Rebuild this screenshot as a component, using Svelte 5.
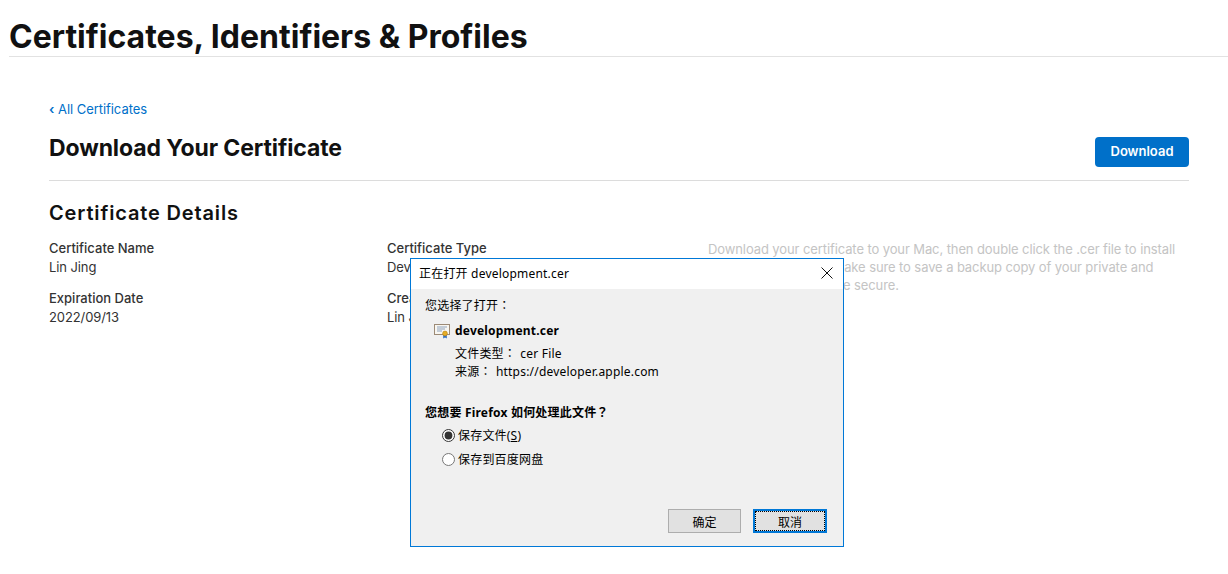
<script>
    let choice = "save";
</script>

<div class="page">
    <header class="top">
        <h1>Certificates, Identifiers &amp; Profiles</h1>
    </header>

    <main class="content">
        <a class="back" href="#top"><span class="chev">‹</span> All Certificates</a>
        <div class="title-row">
            <h2>Download Your Certificate</h2>
            <button class="download">Download</button>
        </div>

        <h3>Certificate Details</h3>
        <div class="details">
            <div class="col">
                <dl>
                    <dt>Certificate Name</dt>
                    <dd>Lin Jing</dd>
                </dl>
                <dl>
                    <dt>Expiration Date</dt>
                    <dd>2022/09/13</dd>
                </dl>
            </div>
            <div class="col">
                <dl>
                    <dt>Certificate Type</dt>
                    <dd>Development</dd>
                </dl>
                <dl>
                    <dt>Created By</dt>
                    <dd>Lin Jing</dd>
                </dl>
            </div>
            <p class="hint">
                Download your certificate to your Mac, then double click the .cer file to install
                in Keychain Access. Make sure to save a backup copy of your private and
                public keys somewhere secure.
            </p>
        </div>
    </main>

    <div class="dialog">
        <div class="dialog-title">
            <span>正在打开 development.cer</span>
            <svg class="close" width="12" height="12" viewBox="0 0 12 12">
                <path d="M.5.5l11 11M11.5.5l-11 11" stroke="#111" fill="none" />
            </svg>
        </div>
        <div class="dialog-body">
            <div class="chosen">您选择了打开<span class="punct">：</span></div>
            <div class="file">
                <svg width="16" height="16" viewBox="0 0 16 16">
                    <rect x=".5" y="1.5" width="15" height="10" fill="#f8f6f1" stroke="#9c8a76" />
                    <path d="M3 4h10M3 6h8M3 8h5" stroke="#8fa3bd" fill="none" />
                    <path d="M9.2 11.5v4l1.8-1 1.8 1v-4z" fill="#2f6fc4" />
                    <circle cx="11" cy="10.5" r="2.4" fill="#e6ad25" stroke="#b9820f" stroke-width=".6" />
                </svg>
                <strong>development.cer</strong>
            </div>
            <div class="meta">
                <div>文件类型<span class="punct">：</span> <span class="gap">cer File</span></div>
                <div>来源<span class="punct">：</span> <span class="gap">https://developer.apple.com</span></div>
            </div>
            <div class="question">您想要 Firefox 如何处理此文件<span class="punct">？</span></div>
            <label class="radio first">
                <input type="radio" bind:group={choice} value="save" />
                <span>保存文件(<u>S</u>)</span>
            </label>
            <label class="radio">
                <input type="radio" bind:group={choice} value="baidu" />
                <span>保存到百度网盘</span>
            </label>
            <div class="actions">
                <button class="win">确定</button>
                <button class="win focused">取消</button>
            </div>
        </div>
    </div>
</div>

<style>
    :global(body) {
        background: #fff;
    }

    .page {
        position: relative;
        height: 574px;
        overflow: hidden;
        font-family: Inter, "Liberation Sans", sans-serif;
        color: #111;
    }

    .top {
        margin: 0 0 0 9px;
        padding-top: 17px;
        height: 39px;
        border-bottom: 1px solid #e2e2e2;
    }

    h1 {
        margin: 0;
        font-size: 32px;
        line-height: 39px;
        font-weight: 700;
        letter-spacing: 0;
    }

    .content {
        padding: 43px 39px 0 49px;
    }

    .back {
        display: block;
        font-size: 13px;
        line-height: 18px;
        letter-spacing: -0.05px;
        color: #0070c9;
        text-decoration: none;
    }

    .chev {
        font-weight: 600;
    }

    .title-row {
        display: flex;
        justify-content: space-between;
        align-items: flex-start;
        height: 53px;
        margin-top: 9px;
        border-bottom: 1px solid #dcdcdc;
    }

    h2 {
        margin: 6px 0 0;
        font-size: 23px;
        line-height: 30px;
        font-weight: 700;
        letter-spacing: -0.1px;
    }

    .download {
        width: 94px;
        height: 30px;
        margin-top: 10px;
        padding: 0 0 2px;
        border: 0;
        border-radius: 4px;
        background: #0070c9;
        color: #fff;
        font: 600 13px Inter, sans-serif;
    }

    h3 {
        margin: 20px 0 0;
        font-size: 20px;
        line-height: 24px;
        font-weight: 600;
        letter-spacing: 0.85px;
    }

    .details {
        display: grid;
        grid-template-columns: 338px 321px 1fr;
        margin-top: 14px;
    }

    dl {
        margin: 0 0 12px;
        font-size: 13px;
        line-height: 19px;
        color: #333;
    }

    dt {
        font-weight: 500;
    }

    dd {
        margin: 0;
        letter-spacing: -0.1px;
    }

    .hint {
        margin: 1px 0 0;
        font-size: 13px;
        line-height: 18px;
        letter-spacing: -0.1px;
        color: #c4c4c4;
    }

    .dialog {
        position: absolute;
        left: 410px;
        top: 258px;
        width: 432px;
        height: 287px;
        border: 1px solid #0078d7;
        background: #f0f0f0;
        font-family: "Noto Sans", "Noto Sans CJK SC", sans-serif;
        font-size: 12px;
        letter-spacing: 0.2px;
        color: #000;
    }

    .dialog-title {
        display: flex;
        justify-content: space-between;
        align-items: center;
        height: 30px;
        padding: 0 10px 2px 8px;
        box-sizing: border-box;
        background: #fff;
    }

    .dialog-body {
        display: flex;
        flex-direction: column;
        height: 257px;
        padding: 0 16px 0 14px;
        box-sizing: border-box;
    }

    .dialog-body div,
    .radio {
        line-height: 17px;
    }

    .punct {
        font-family: "Noto Sans CJK TC", sans-serif;
        line-height: 0;
    }

    .gap {
        margin-left: 1px;
    }

    .chosen {
        margin-top: 8px;
    }

    .file {
        display: flex;
        align-items: center;
        gap: 5px;
        margin: 8px 0 0 9px;
    }

    .file strong {
        font-size: 12px;
    }

    .meta {
        margin: 6px 0 0 30px;
    }

    .meta div {
        line-height: 18px;
    }

    .question {
        margin-top: 23px;
        font-weight: 700;
    }

    .radio {
        display: flex;
        align-items: center;
        gap: 3px;
        margin: 7px 0 0 17px;
    }

    .radio.first {
        margin-top: 6px;
    }

    .radio input {
        width: 13px;
        height: 13px;
        margin: 0;
        accent-color: #333;
    }

    .actions {
        display: flex;
        justify-content: flex-end;
        gap: 12px;
        margin-top: auto;
        margin-bottom: 13px;
    }

    .win {
        width: 73px;
        height: 24px;
        padding: 0;
        border: 1px solid #adadad;
        border-radius: 0;
        background: #e1e1e1;
        color: #000;
        font: 12px "Noto Sans CJK SC", sans-serif;
    }

    .win.focused {
        width: 74px;
        border: 2px solid #0078d7;
        outline: 1px dotted #000;
        outline-offset: -3px;
    }
</style>
